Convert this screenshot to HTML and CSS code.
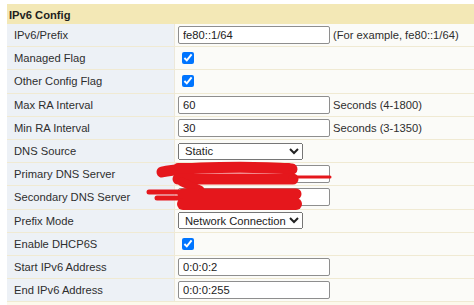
FILE: index.html
```html
<!DOCTYPE html>
<html>
<head>
<meta charset="utf-8">
<link rel="stylesheet" href="styles.css">
</head>
<body>
<div class="page">
  <div class="panel">
    <div class="panel-head">IPv6 Config</div>
    <div class="row">
      <div class="label">IPv6/Prefix</div>
      <div class="value"><input class="text" type="text" value="fe80::1/64"><span class="hint">(For example, fe80::1/64)</span></div>
    </div>
    <div class="row">
      <div class="label">Managed Flag</div>
      <div class="value"><input class="check" type="checkbox" checked></div>
    </div>
    <div class="row">
      <div class="label">Other Config Flag</div>
      <div class="value"><input class="check" type="checkbox" checked></div>
    </div>
    <div class="row">
      <div class="label">Max RA Interval</div>
      <div class="value"><input class="text" type="text" value="60"><span class="hint">Seconds (4-1800)</span></div>
    </div>
    <div class="row">
      <div class="label">Min RA Interval</div>
      <div class="value"><input class="text" type="text" value="30"><span class="hint">Seconds (3-1350)</span></div>
    </div>
    <div class="row">
      <div class="label">DNS Source</div>
      <div class="value"><select class="pick"><option>Static</option></select></div>
    </div>
    <div class="row">
      <div class="label">Primary DNS Server</div>
      <div class="value"><input class="text" type="text" value=""></div>
    </div>
    <div class="row">
      <div class="label">Secondary DNS Server</div>
      <div class="value"><input class="text" type="text" value=""></div>
    </div>
    <div class="row">
      <div class="label">Prefix Mode</div>
      <div class="value"><select class="pick"><option>Network Connection</option></select></div>
    </div>
    <div class="row">
      <div class="label">Enable DHCP6S</div>
      <div class="value"><input class="check" type="checkbox" checked></div>
    </div>
    <div class="row">
      <div class="label">Start IPv6 Address</div>
      <div class="value"><input class="text" type="text" value="0:0:0:2"></div>
    </div>
    <div class="row">
      <div class="label">End IPv6 Address</div>
      <div class="value"><input class="text" type="text" value="0:0:0:255"></div>
    </div>
    <div class="panel-foot"></div>
  </div>
  <svg class="scribble" width="474" height="305" viewBox="0 0 474 305" aria-hidden="true">
    <g fill="none" stroke="#e5171c" stroke-linecap="round" stroke-linejoin="round">
      <path d="M162 172 C185 167 250 166 292 169" stroke-width="11"/>
      <path d="M178 167 L288 167" stroke-width="8"/>
      <path d="M178 179 L293 179" stroke-width="11"/>
      <path d="M290 177 L330 177" stroke-width="3"/>
      <path d="M182 182 L200 190" stroke-width="9"/>
      <path d="M149 192 L200 192" stroke-width="5"/>
      <path d="M157 198 L200 198" stroke-width="5"/>
      <path d="M183 194 L296 194" stroke-width="11"/>
      <path d="M183 204 L296 204" stroke-width="12"/>
    </g>
  </svg>
</div>
</body>
</html>
```
FILE: styles.css
```css
html, body {
  margin: 0;
  padding: 0;
  background: #ffffff;
}
.page {
  position: relative;
  width: 474px;
  height: 305px;
  overflow: hidden;
  padding: 4px 0 0 7px;
  box-sizing: border-box;
  font-family: "Liberation Sans", Arial, sans-serif;
  font-size: 11.2px;
  color: #2e2e2e;
}
.panel {
  width: 480px;
  display: flex;
  flex-direction: column;
}
.panel-head {
  height: 20px;
  box-sizing: border-box;
  padding: 2px 0 0 2px;
  line-height: 18px;
  background: #f3e8b6;
  font-weight: bold;
  color: #1e1e1e;
}
.row {
  display: grid;
  grid-template-columns: 167px 1fr;
  height: 23.2px;
  box-sizing: border-box;
  border-bottom: 1px solid #f0ead3;
}
.label {
  background: #edf1f6;
  padding-left: 7px;
  line-height: 22px;
  white-space: nowrap;
}
.value {
  background: #fbfbf8;
  border-left: 1px solid #ece8da;
  padding-left: 3px;
  display: flex;
  align-items: center;
  gap: 3px;
}
.text {
  width: 152px;
  height: 18px;
  box-sizing: border-box;
  margin: 0;
  padding: 0 4px;
  border: 1px solid #8e8e8e;
  border-radius: 2px;
  background: #ffffff;
  font-family: "Liberation Sans", Arial, sans-serif;
  font-size: 11.2px;
  color: #222222;
}
.hint {
  white-space: nowrap;
  color: #2e2e2e;
}
.check {
  width: 12px;
  height: 12px;
  margin: 0 0 0 4px;
}
.pick {
  width: 125px;
  height: 17px;
  margin: 0;
  padding: 0 0 0 2px;
  font-family: "Liberation Sans", Arial, sans-serif;
  font-size: 11.2px;
  color: #222222;
}
.panel-foot {
  height: 6px;
  background: #fcf9ec;
}
.scribble {
  position: absolute;
  left: 0;
  top: 0;
  pointer-events: none;
}
```
